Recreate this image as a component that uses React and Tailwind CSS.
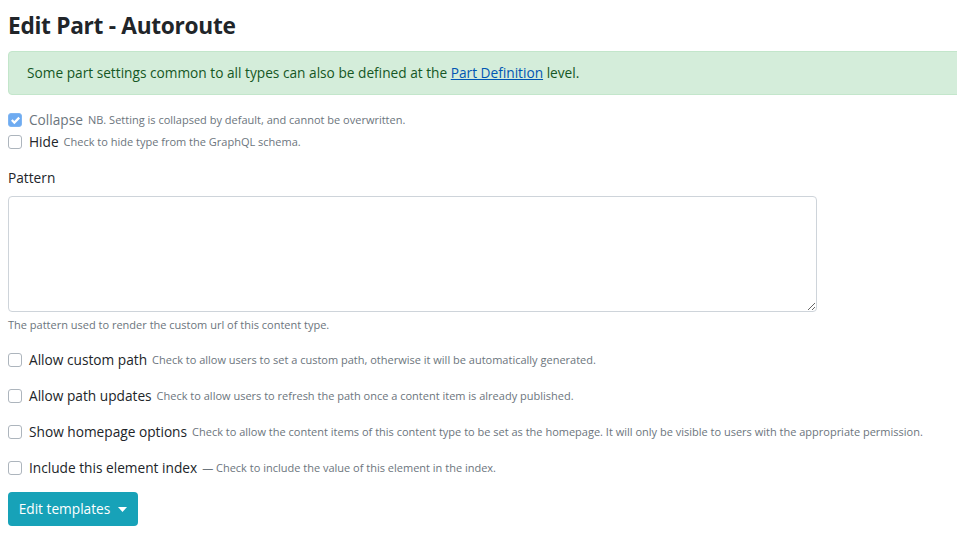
import React from 'react'

const font = { fontFamily: '"Open Sans", "Noto Sans", sans-serif' }

const Check = ({ checked }) => (
  <span
    className={
      'flex h-[14px] w-[14px] shrink-0 items-center justify-center rounded-[3px] border ' +
      (checked ? 'border-[#7fb5f2] bg-[#6eabf1]' : 'border-[#adb5bd] bg-white')
    }
  >
    {checked && (
      <svg width="9" height="9" viewBox="0 0 8 8">
        <path fill="#fff" d="M6.564.75l-3.59 3.612-1.538-1.55L0 4.26l2.974 2.99L8 2.193z" />
      </svg>
    )}
  </span>
)

const Row = ({ label, hint, checked, disabled }) => (
  <label className="flex h-[22px] items-center gap-[7px]">
    <Check checked={checked} />
    <span className={'text-[13.7px] ' + (disabled ? 'text-[#6c757d]' : 'text-[#212529]')}>{label}</span>
    <span className="ml-[-2px] text-[11px] text-[#6c757d]">{hint}</span>
  </label>
)

export default function App() {
  return (
    <div className="min-h-screen overflow-hidden bg-white pl-2 text-[#212529]" style={font}>
      <h1 className="pt-[11px] text-[22.7px] font-bold leading-[30px] tracking-[-0.3px]">Edit Part - Autoroute</h1>

      <div className="mr-[-12px] mt-[10px] rounded-[4px] border border-[#c3e6cb] bg-[#d4edda] py-[12px] pl-[18px] text-[13.7px] leading-[18px] text-[#155724]">
        Some part settings common to all types can also be defined at the{' '}
        <a href="#" className="text-[#0056b3] underline">Part Definition</a> level.
      </div>

      <div className="mt-[14px]">
        <Row checked disabled label="Collapse" hint="NB. Setting is collapsed by default, and cannot be overwritten." />
        <Row label="Hide" hint="Check to hide type from the GraphQL schema." />
      </div>

      <div className="mt-[15px] text-[13.7px] leading-[20px]">Pattern</div>
      <textarea className="mt-[8px] block h-[116px] w-[809px] rounded-[4px] border border-[#ced4da] bg-white" />
      <div className="mt-[4px] text-[11px] leading-[18px] text-[#6c757d]">The pattern used to render the custom url of this content type.</div>

      <div className="mt-[15px] flex flex-col gap-[14px]">
        <Row label="Allow custom path" hint="Check to allow users to set a custom path, otherwise it will be automatically generated." />
        <Row label="Allow path updates" hint="Check to allow users to refresh the path once a content item is already published." />
        <Row label="Show homepage options" hint="Check to allow the content items of this content type to be set as the homepage. It will only be visible to users with the appropriate permission." />
        <Row label="Include this element index" hint="— Check to include the value of this element in the index." />
      </div>

      <button className="mt-[13px] flex h-[34px] w-[130px] items-center justify-center gap-[8px] rounded-[4px] bg-[#17a2b8] text-[13.7px] text-white">
        Edit templates
        <svg width="9" height="5" viewBox="0 0 9 5">
          <path fill="#fff" d="M0 0h9L4.5 5z" />
        </svg>
      </button>
    </div>
  )
}
